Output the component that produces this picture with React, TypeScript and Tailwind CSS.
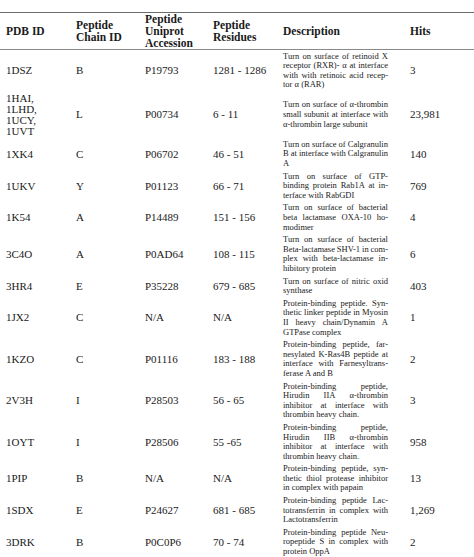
import React from 'react';

type Row = {
    pdb: string[];
    chain: string;
    uniprot: string;
    residues: string;
    desc: string[];
    hits: string;
};

const rows: Row[] = [
    { pdb: ['1DSZ'], chain: 'B', uniprot: 'P19793', residues: '1281 - 1286', hits: '3',
        desc: ['Turn on surface of retinoid X', 'receptor (RXR)- α at interface', 'with with retinoic acid recep-', 'tor α (RAR)'] },
    { pdb: ['1HAI,', '1LHD,', '1UCY,', '1UVT'], chain: 'L', uniprot: 'P00734', residues: '6 - 11', hits: '23,981',
        desc: ['Turn on surface of α-thrombin', 'small subunit at interface with', 'α-thrombin large subunit'] },
    { pdb: ['1XK4'], chain: 'C', uniprot: 'P06702', residues: '46 - 51', hits: '140',
        desc: ['Turn on surface of Calgranulin', 'B at interface with Calgranulin', 'A'] },
    { pdb: ['1UKV'], chain: 'Y', uniprot: 'P01123', residues: '66 - 71', hits: '769',
        desc: ['Turn on surface of GTP-', 'binding protein Rab1A at in-', 'terface with RabGDI'] },
    { pdb: ['1K54'], chain: 'A', uniprot: 'P14489', residues: '151 - 156', hits: '4',
        desc: ['Turn on surface of bacterial', 'beta lactamase OXA-10 ho-', 'modimer'] },
    { pdb: ['3C4O'], chain: 'A', uniprot: 'P0AD64', residues: '108 - 115', hits: '6',
        desc: ['Turn on surface of bacterial', 'Beta-lactamase SHV-1 in com-', 'plex with beta-lactamase in-', 'hibitory protein'] },
    { pdb: ['3HR4'], chain: 'E', uniprot: 'P35228', residues: '679 - 685', hits: '403',
        desc: ['Turn on surface of nitric oxid', 'synthase'] },
    { pdb: ['1JX2'], chain: 'C', uniprot: 'N/A', residues: 'N/A', hits: '1',
        desc: ['Protein-binding peptide. Syn-', 'thetic linker peptide in Myosin', 'II heavy chain/Dynamin A', 'GTPase complex'] },
    { pdb: ['1KZO'], chain: 'C', uniprot: 'P01116', residues: '183 - 188', hits: '2',
        desc: ['Protein-binding peptide, far-', 'nesylated K-Ras4B peptide at', 'interface with Farnesyltrans-', 'ferase A and B'] },
    { pdb: ['2V3H'], chain: 'I', uniprot: 'P28503', residues: '56 - 65', hits: '3',
        desc: ['Protein-binding peptide,', 'Hirudin IIA α-thrombin', 'inhibitor at interface with', 'thrombin heavy chain.'] },
    { pdb: ['1OYT'], chain: 'I', uniprot: 'P28506', residues: '55 -65', hits: '958',
        desc: ['Protein-binding peptide,', 'Hirudin IIB α-thrombin', 'inhibitor at interface with', 'thrombin heavy chain.'] },
    { pdb: ['1PIP'], chain: 'B', uniprot: 'N/A', residues: 'N/A', hits: '13',
        desc: ['Protein-binding peptide, syn-', 'thetic thiol protease inhibitor', 'in complex with papain'] },
    { pdb: ['1SDX'], chain: 'E', uniprot: 'P24627', residues: '681 - 685', hits: '1,269',
        desc: ['Protein-binding peptide Lac-', 'totransferrin in complex with', 'Lactotransferrin'] },
    { pdb: ['3DRK'], chain: 'B', uniprot: 'P0C0P6', residues: '70 - 74', hits: '2',
        desc: ['Protein-binding peptide Neu-', 'ropeptide S in complex with', 'protein OppA'] },
];

function HeadCell({ lines }: { lines: string[] }) {
    return (
        <th className="px-[6px] py-0 text-left align-middle font-bold text-[11.5px] leading-[12px]">
            {lines.map((l) => (
                <div key={l}>{l}</div>
            ))}
        </th>
    );
}

// one typeset line of the description; all but the last are stretched to the full measure
function DescLine({ text, justify }: { text: string; justify: boolean }) {
    if (!justify) return <div className="whitespace-nowrap">{text}</div>;
    return (
        <div className="flex justify-between whitespace-nowrap">
            {text.split(' ').map((w, i) => (
                <span key={i}>{w}</span>
            ))}
        </div>
    );
}

export default function App() {
    const cell = 'px-[6px] py-[1.5px] align-middle text-[11px] leading-[11px] whitespace-nowrap';

    return (
        <div className="w-[474px] h-[557px] overflow-hidden bg-white pt-[12px] text-[#1a1a1a] font-['Liberation_Serif','Times_New_Roman',serif]">
            <table className="w-[474px] table-fixed border-collapse">
                <colgroup>
                    <col className="w-[70px]" />
                    <col className="w-[69px]" />
                    <col className="w-[68px]" />
                    <col className="w-[70px]" />
                    <col className="w-[127px]" />
                    <col className="w-[70px]" />
                </colgroup>
                <thead>
                    <tr className="border-t-[1.5px] border-b border-t-[#6b6b6b] border-b-[#8a8a8a]">
                        <HeadCell lines={['PDB ID']} />
                        <HeadCell lines={['Peptide', 'Chain ID']} />
                        <HeadCell lines={['Peptide', 'Uniprot', 'Accession']} />
                        <HeadCell lines={['Peptide', 'Residues']} />
                        <HeadCell lines={['Description']} />
                        <HeadCell lines={['Hits']} />
                    </tr>
                </thead>
                <tbody>
                    {rows.map((r) => (
                        <tr key={r.pdb[0]}>
                            <td className={cell}>
                                {r.pdb.map((p) => (
                                    <div key={p}>{p}</div>
                                ))}
                            </td>
                            <td className={cell}>{r.chain}</td>
                            <td className={cell}>{r.uniprot}</td>
                            <td className={cell}>{r.residues}</td>
                            <td className="pl-[6px] pr-[16px] py-[1.5px] align-middle text-[8.5px] leading-[9.6px]">
                                {r.desc.map((d, i) => (
                                    <DescLine key={i} text={d} justify={i < r.desc.length - 1} />
                                ))}
                            </td>
                            <td className={cell}>{r.hits}</td>
                        </tr>
                    ))}
                </tbody>
            </table>
        </div>
    );
}
